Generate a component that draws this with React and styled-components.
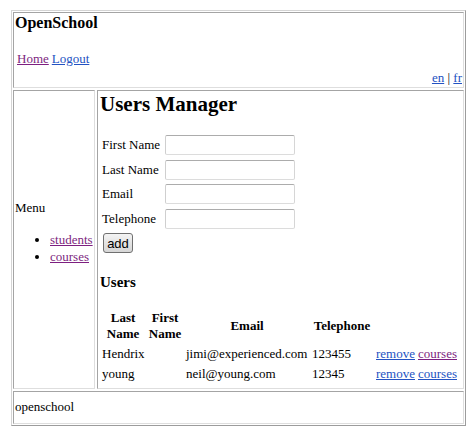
import React from 'react'
import styled, { createGlobalStyle } from 'styled-components'

const GlobalStyle = createGlobalStyle`
    html, body {
        margin: 0;
        padding: 0;
        background: #ffffff;
    }
    body {
        font-family: "Liberation Serif", "Times New Roman", serif;
        font-size: 13px;
        color: #000000;
    }
    * {
        box-sizing: border-box;
    }
`

const Page = styled.div`
    padding: 10px 0 0 11px;
`

const Frame = styled.div`
    width: 455px;
    height: 416px;
    display: grid;
    grid-template-columns: 82px 367px;
    grid-template-rows: 76px 299px 33px;
    gap: 2px;
    padding: 1px;
    border: 1px solid;
    border-color: #d4d4d4 #9c9c9c #9c9c9c #d4d4d4;
`

const Cell = styled.div`
    border: 1px solid;
    border-color: #a4a4a4 #dedede #dedede #a4a4a4;
    padding: 1px;
    min-width: 0;
`

const Header = styled(Cell)`
    grid-column: 1 / 3;
    display: flex;
    flex-direction: column;
`

const Brand = styled.div`
    font-size: 16px;
    font-weight: bold;
    line-height: 18px;
`

const NavLinks = styled.div`
    margin-top: 19px;
    padding-left: 2px;
    line-height: 15px;
    display: flex;
    gap: 3px;
`

const Lang = styled.div`
    margin-top: 4px;
    line-height: 15px;
    text-align: right;
`

const Link = styled.a`
    color: ${({ $visited }) => ($visited ? '#7d1f80' : '#2352c2')};
    text-decoration: underline;
    cursor: pointer;
`

const Sidebar = styled(Cell)`
    display: flex;
    flex-direction: column;
    justify-content: center;
`

const MenuTitle = styled.div`
    line-height: 15px;
`

const MenuList = styled.ul`
    margin: 16px 0 14px;
    padding-left: 35px;
    list-style: disc;
    li {
        line-height: 17px;
    }
`

const Content = styled(Cell)`
    display: flex;
    flex-direction: column;
`

const PageTitle = styled.h2`
    margin: 0;
    font-size: 21px;
    line-height: 24px;
    font-weight: bold;
    padding-left: 1px;
`

const Form = styled.div`
    margin: 19px 0 0 3px;
    display: grid;
    grid-template-columns: 61px 130px;
    grid-auto-rows: 20px;
    column-gap: 2px;
    row-gap: 4.6px;
`

const Label = styled.label`
    line-height: 20px;
    white-space: nowrap;
`

const Input = styled.input`
    width: 130px;
    height: 20px;
    margin: 0;
    border: 1px solid;
    border-color: #acacac #d6d6d6 #dcdcdc #cfcfcf;
    border-radius: 2px;
    background: #ffffff;
    font-size: 13px;
`

const AddButton = styled.button`
    justify-self: start;
    margin-left: 1px;
    width: 30px;
    height: 20px;
    padding: 0;
    font-family: "Liberation Sans", Arial, sans-serif;
    font-size: 13px;
    color: #000000;
    border: 1px solid #707070;
    border-radius: 3px;
    background: linear-gradient(#f4f4f4, #e4e4e4 50%, #d6d6d6);
`

const SectionTitle = styled.h3`
    margin: 20px 0 0;
    font-size: 15px;
    line-height: 18px;
    font-weight: bold;
    padding-left: 1px;
`

const UsersTable = styled.table`
    margin-top: 17px;
    margin-left: 1px;
    width: 361px;
    table-layout: fixed;
    border-collapse: collapse;
    border-spacing: 0;
    font-size: 13px;
`

const Th = styled.th`
    width: ${({ $w }) => $w}px;
    padding: 2px 2px;
    line-height: 16px;
    font-weight: bold;
    text-align: center;
    vertical-align: middle;
`

const Td = styled.td`
    padding: 0 2px;
    line-height: 20px;
    white-space: nowrap;
    vertical-align: middle;
`

const Actions = styled(Td)`
    display: flex;
    gap: 3px;
`

const Footer = styled(Cell)`
    grid-column: 1 / 3;
    display: flex;
    align-items: center;
    line-height: 15px;
    padding-bottom: 3px;
`

const fields = ['First Name', 'Last Name', 'Email', 'Telephone']

const users = [
    { last: 'Hendrix', first: '', email: 'jimi@experienced.com', phone: '123455', coursesVisited: true },
    { last: 'young', first: '', email: 'neil@young.com', phone: '12345', coursesVisited: false },
]

const App = () => {
    return (
        <Page>
            <GlobalStyle />
            <Frame>
                <Header>
                    <Brand>OpenSchool</Brand>
                    <NavLinks>
                        <Link $visited>Home</Link>
                        <Link>Logout</Link>
                    </NavLinks>
                    <Lang>
                        <Link>en</Link> | <Link>fr</Link>
                    </Lang>
                </Header>
                <Sidebar>
                    <MenuTitle>Menu</MenuTitle>
                    <MenuList>
                        <li><Link $visited>students</Link></li>
                        <li><Link $visited>courses</Link></li>
                    </MenuList>
                </Sidebar>
                <Content>
                    <PageTitle>Users Manager</PageTitle>
                    <Form>
                        {fields.map((f) => (
                            <React.Fragment key={f}>
                                <Label>{f}</Label>
                                <Input type="text" />
                            </React.Fragment>
                        ))}
                        <AddButton>add</AddButton>
                    </Form>
                    <SectionTitle>Users</SectionTitle>
                    <UsersTable>
                        <thead>
                            <tr>
                                <Th $w={46}>Last Name</Th>
                                <Th $w={38}>First Name</Th>
                                <Th $w={126}>Email</Th>
                                <Th $w={64}>Telephone</Th>
                                <Th $w={87}></Th>
                            </tr>
                        </thead>
                        <tbody>
                            {users.map((u) => (
                                <tr key={u.email}>
                                    <Td>{u.last}</Td>
                                    <Td>{u.first}</Td>
                                    <Td>{u.email}</Td>
                                    <Td>{u.phone}</Td>
                                    <Actions>
                                        <Link>remove</Link>
                                        <Link $visited={u.coursesVisited}>courses</Link>
                                    </Actions>
                                </tr>
                            ))}
                        </tbody>
                    </UsersTable>
                </Content>
                <Footer>openschool</Footer>
            </Frame>
        </Page>
    )
}

export default App
